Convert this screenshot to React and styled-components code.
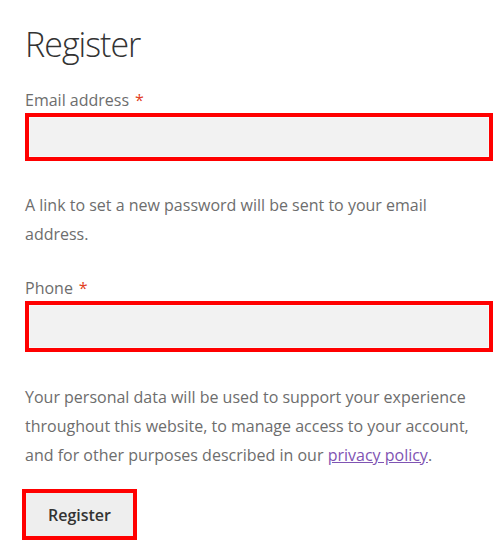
import React from 'react';
import styled, { createGlobalStyle } from 'styled-components';

const GlobalStyle = createGlobalStyle`
  body {
    margin: 0;
    background: #ffffff;
    font-family: "Open Sans", "Liberation Sans", sans-serif;
    color: #6d6d6d;
  }
`;

const Page = styled.form`
  display: flex;
  flex-direction: column;
  padding: 20px 11px 0 25px;
  width: 504px;
  box-sizing: border-box;
`;

const Title = styled.h2`
  margin: 0 0 22px;
  font-size: 34px;
  font-weight: 300;
  line-height: 48px;
  color: #333333;
  letter-spacing: -1px;
`;

const Field = styled.div`
  display: flex;
  flex-direction: column;
  margin-bottom: ${(p) => p.gap || 0}px;
`;

const Label = styled.label`
  font-size: 16px;
  line-height: 20px;
  margin-bottom: ${(p) => p.gap || 3}px;
  color: #6d6d6d;

  span {
    color: #e2401c;
    margin-left: 6px;
  }
`;

const Input = styled.input`
  box-sizing: border-box;
  height: ${(p) => p.h || 48}px;
  width: 468px;
  background: #f2f2f2;
  border: 4px solid #ff0000;
  box-shadow: inset 0 0 0 1px #f8f8f8;
  outline: none;
`;

const Text = styled.p`
  margin: 0 0 ${(p) => p.gap || 0}px;
  font-size: 16px;
  line-height: 29px;
  width: 460px;

  a {
    color: #7f54b3;
    text-decoration: underline;
  }
`;

const Button = styled.button`
  align-self: flex-start;
  margin-left: -3px;
  box-sizing: border-box;
  width: 115px;
  height: 51px;
  background: #eeeeee;
  border: 4px solid #ff0000;
  font-family: inherit;
  font-size: 16px;
  font-weight: 600;
  color: #333333;
`;

const App = function () {
  return (
    <>
      <GlobalStyle />
      <Page onSubmit={(e) => e.preventDefault()}>
        <Title>Register</Title>
        <Field gap={30}>
          <Label>
            Email address
            <span>*</span>
          </Label>
          <Input type="email" />
        </Field>
        <Text gap={29}>
          A link to set a new password will be sent to your email address.
        </Text>
        <Field gap={31}>
          <Label gap={3}>
            Phone
            <span>*</span>
          </Label>
          <Input type="tel" h={51} />
        </Field>
        <Text gap={19}>
          Your personal data will be used to support your experience throughout
          this website, to manage access to your account, and for other purposes
          described in our
          {' '}
          <a href="#privacy">privacy policy</a>
          .
        </Text>
        <Button type="submit">Register</Button>
      </Page>
    </>
  );
};

export default App;
